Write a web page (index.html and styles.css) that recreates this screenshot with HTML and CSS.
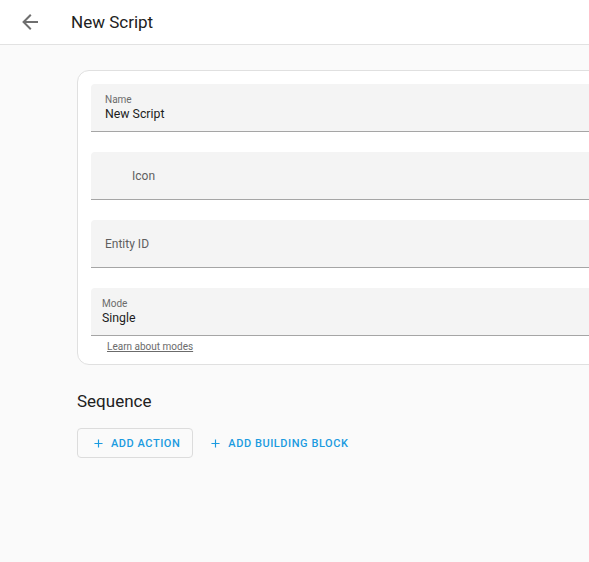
FILE: index.html
```html
<!DOCTYPE html>
<html lang="en">

<head>
    <meta charset="utf-8">
    <meta name="viewport" content="width=device-width, initial-scale=1.0">
    <title>New Script</title>
    <link rel="stylesheet" href="styles.css">
</head>

<body>
    <header class="toolbar">
        <button class="back" aria-label="Back">
            <svg viewBox="0 0 24 24" width="24" height="24">
                <path d="M20,11V13H8L13.5,18.5L12.08,19.92L4.16,12L12.08,4.08L13.5,5.5L8,11H20Z" />
            </svg>
        </button>
        <h1 class="title">New Script</h1>
    </header>

    <main class="content">
        <section class="card">
            <div class="field filled">
                <span class="label">Name</span>
                <span class="value">New Script</span>
            </div>
            <div class="field empty icon-field">
                <span class="placeholder">Icon</span>
            </div>
            <div class="field empty">
                <span class="placeholder">Entity ID</span>
            </div>
            <div class="field filled select">
                <span class="label">Mode</span>
                <span class="value">Single</span>
            </div>
            <a class="learn" href="#">Learn about modes</a>
        </section>

        <h2 class="heading">Sequence</h2>
        <div class="actions">
            <button class="btn outlined">
                <svg viewBox="0 0 10 10" width="9" height="9">
                    <path d="M5 0.5V9.5M0.5 5H9.5" />
                </svg>
                ADD ACTION
            </button>
            <button class="btn">
                <svg viewBox="0 0 10 10" width="9" height="9">
                    <path d="M5 0.5V9.5M0.5 5H9.5" />
                </svg>
                ADD BUILDING BLOCK
            </button>
        </div>
    </main>
</body>

</html>
```
FILE: styles.css
```css
* {
    box-sizing: border-box;
}

body {
    margin: 0;
    background: #fafafa;
    font-family: Roboto, "Noto Sans", sans-serif;
    color: #212121;
    overflow: hidden;
}

.toolbar {
    height: 45px;
    background: #fff;
    border-bottom: 1px solid #e2e2e2;
    display: flex;
    align-items: center;
}

.back {
    width: 24px;
    height: 24px;
    margin-left: 18px;
    padding: 0;
    border: 0;
    background: none;
    display: flex;
}

.back svg {
    fill: #6f6f6f;
}

.title {
    margin: 0 0 0 29px;
    font-size: 17px;
    font-weight: 400;
    line-height: 24px;
}

.content {
    padding: 25px 0 0 77px;
}

.card {
    width: 560px;
    background: #fff;
    border: 1px solid #e0e0e0;
    border-radius: 12px;
    padding: 13px 0 10px 13px;
    display: flex;
    flex-direction: column;
    gap: 20px;
}

.field {
    height: 48px;
    background: #f4f4f4;
    border-bottom: 1px solid #a5a5a5;
    border-radius: 4px 4px 0 0;
    padding-left: 14px;
    display: flex;
    flex-direction: column;
}

.field.filled {
    padding-top: 10px;
}

.field.empty {
    justify-content: center;
}

.field.icon-field {
    padding-left: 41px;
}

.field.select {
    padding-left: 11px;
}

.label {
    font-size: 10px;
    line-height: 11px;
    color: #6b6b6b;
}

.value {
    font-size: 12.3px;
    line-height: 19px;
    color: #1c1c1c;
}

.placeholder {
    font-size: 12px;
    line-height: 18px;
    color: #5f5f5f;
}

.learn {
    margin: -16px 0 0 16px;
    font-size: 10px;
    line-height: 14px;
    color: #6b6b6b;
}

.heading {
    margin: 24px 0 0;
    font-size: 17px;
    font-weight: 400;
    line-height: 24px;
}

.actions {
    margin-top: 15px;
    display: flex;
    gap: 1px;
}

.btn {
    height: 30px;
    padding: 0 12px 0 16px;
    border: 1px solid transparent;
    border-radius: 4px;
    background: none;
    color: #1b9be0;
    font-family: Roboto, "Noto Sans", sans-serif;
    font-size: 11px;
    font-weight: 500;
    letter-spacing: 0.55px;
    display: flex;
    align-items: center;
    gap: 8px;
}

.btn.outlined {
    border-color: #dcdcdc;
}

.btn svg {
    stroke: #1b9be0;
    stroke-width: 1.3;
    fill: none;
}
```
